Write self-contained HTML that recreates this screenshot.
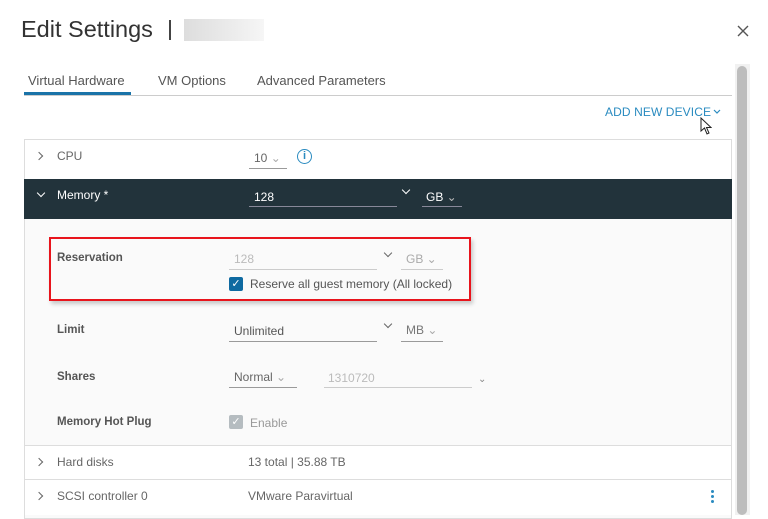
<!DOCTYPE html>
<html><head><style>
*{margin:0;padding:0;box-sizing:border-box}
body{width:768px;height:515px;background:#fff;font-family:"Liberation Sans",sans-serif;color:#565656;position:relative;overflow:hidden;font-size:12px}
.a{position:absolute;white-space:nowrap}
.ul{position:absolute;height:1px;background:#9a9a9a}
.chev{position:absolute;width:6px;height:6px;border-right:1.3px solid #666;border-bottom:1.3px solid #666}
</style></head><body>
<div class="a" style="left:21px;top:16px;font-size:23.5px;color:#333">Edit Settings</div>
<div class="a" style="left:169px;top:20px;width:1.5px;height:20px;background:#444"></div>
<div class="a" style="left:184px;top:19px;width:80px;height:22px;background:linear-gradient(90deg,#ddd,#eee 70%,#f6f6f6)"></div>
<svg class="a" style="left:737px;top:25px" width="12" height="12"><path d="M1 1L11 11M11 1L1 11" stroke="#555" stroke-width="1.4"/></svg>

<div class="a" style="left:28px;top:73px;font-size:13px;color:#555">Virtual Hardware</div>
<div class="a" style="left:158px;top:73px;font-size:13px;color:#555">VM Options</div>
<div class="a" style="left:257px;top:73px;font-size:13px;color:#555">Advanced Parameters</div>
<div class="a" style="left:24px;top:95px;width:708px;height:1px;background:#ccc"></div>
<div class="a" style="left:24px;top:92px;width:107px;height:3px;background:#1a73a8"></div>

<div class="a" style="left:735px;top:64px;width:15px;height:451px;background:#f1f1f1"></div>
<div class="a" style="left:737px;top:66px;width:10px;height:449px;background:#bdbdbd;border-radius:5px"></div>

<div class="a" style="left:605px;top:105px;font-size:12px;color:#2a8bc0;letter-spacing:0.1px">ADD NEW DEVICE</div>
<svg class="a" style="left:713px;top:109px" width="8" height="6"><path d="M1 1L4 4L7 1" stroke="#2a8bc0" fill="none" stroke-width="1.2"/></svg>
<svg class="a" style="left:700px;top:117px" width="12" height="18"><path d="M1 1L1 14L4.5 11L7 17L9 16L6.5 10.5L11 10.5Z" fill="#fff" stroke="#222" stroke-width="1"/></svg>

<div class="a" style="left:24px;top:139px;width:708px;height:380px;border:1px solid #ddd;background:#fafafa"></div>
<div class="a" style="left:25px;top:140px;width:706px;height:39px;background:#fff"></div>
<div class="chev" style="left:36px;top:153px;transform:rotate(-45deg)"></div>
<div class="a" style="left:57px;top:149px;font-size:12px;color:#666">CPU</div>
<div class="a" style="left:254px;top:151px;font-size:12px;color:#666">10 <span style="color:#aaa">⌄</span></div>
<div class="ul" style="left:249px;top:168px;width:38px"></div>
<div class="a" style="left:297px;top:149px;width:15px;height:15px;border:1.5px solid #2a8bc0;border-radius:50%;color:#2a8bc0;font-size:11px;font-weight:bold;text-align:center;line-height:12px">i</div>

<div class="a" style="left:24px;top:179px;width:708px;height:40px;background:#22333b"></div>
<div class="chev" style="left:38px;top:190px;transform:rotate(45deg);border-color:#fff"></div>
<div class="a" style="left:57px;top:188px;font-size:12px;color:#fff">Memory *</div>
<div class="a" style="left:254px;top:190px;font-size:12px;color:#fff">128</div>
<div class="ul" style="left:249px;top:206px;width:148px;background:#889"></div>
<div class="chev" style="left:403px;top:187px;transform:rotate(45deg);border-color:#fff"></div>
<div class="a" style="left:426px;top:190px;font-size:12px;color:#fff">GB <span style="color:#bbb">⌄</span></div>
<div class="ul" style="left:422px;top:206px;width:40px;background:#889"></div>

<div class="a" style="left:49px;top:237px;width:422px;height:64px;border:2px solid #e8141c;box-shadow:2px 3px 4px rgba(0,0,0,.2)"></div>
<div class="a" style="left:57px;top:252px;font-size:11.5px;font-weight:bold;color:#555">Reservation</div>
<div class="a" style="left:234px;top:252px;color:#bbb">128</div>
<div class="ul" style="left:229px;top:269px;width:148px;background:#ccc"></div>
<div class="chev" style="left:385px;top:250px;transform:rotate(45deg)"></div>
<div class="a" style="left:406px;top:252px;color:#aaa">GB ⌄</div>
<div class="ul" style="left:401px;top:269px;width:42px;background:#ccc"></div>
<div class="a" style="left:229px;top:277px;width:14px;height:14px;background:#0f6aa1;border-radius:2px;color:#fff;font-size:11px;text-align:center;line-height:14px">✓</div>
<div class="a" style="left:250px;top:277px;color:#555">Reserve all guest memory (All locked)</div>

<div class="a" style="left:57px;top:324px;font-size:11.5px;font-weight:bold;color:#555">Limit</div>
<div class="a" style="left:234px;top:324px;color:#555">Unlimited</div>
<div class="ul" style="left:229px;top:341px;width:148px"></div>
<div class="chev" style="left:385px;top:321px;transform:rotate(45deg)"></div>
<div class="a" style="left:406px;top:323px;color:#777">MB <span style="color:#aaa">⌄</span></div>
<div class="ul" style="left:401px;top:341px;width:42px"></div>

<div class="a" style="left:57px;top:371px;font-size:11.5px;font-weight:bold;color:#555">Shares</div>
<div class="a" style="left:234px;top:370px;color:#666">Normal <span style="color:#aaa">⌄</span></div>
<div class="ul" style="left:229px;top:387px;width:68px"></div>
<div class="a" style="left:328px;top:371px;color:#bbb">1310720</div>
<div class="ul" style="left:324px;top:387px;width:148px;background:#ccc"></div>
<div class="a" style="left:478px;top:374px;color:#888;font-size:10px">⌄</div>

<div class="a" style="left:57px;top:416px;font-size:11.5px;font-weight:bold;color:#555">Memory Hot Plug</div>
<div class="a" style="left:229px;top:415px;width:14px;height:14px;background:#b5bcc0;border-radius:2px;color:#fff;font-size:11px;text-align:center;line-height:14px">✓</div>
<div class="a" style="left:250px;top:416px;color:#999">Enable</div>

<div class="a" style="left:25px;top:445px;width:706px;height:70px;background:#fff;border-top:1px solid #ddd"></div>
<div class="a" style="left:25px;top:479px;width:706px;height:1px;background:#ddd"></div>
<div class="chev" style="left:36px;top:459px;transform:rotate(-45deg)"></div>
<div class="a" style="left:57px;top:455px;color:#666">Hard disks</div>
<div class="a" style="left:248px;top:455px;color:#666">13 total | 35.88 TB</div>
<div class="chev" style="left:36px;top:493px;transform:rotate(-45deg)"></div>
<div class="a" style="left:57px;top:489px;color:#666">SCSI controller 0</div>
<div class="a" style="left:248px;top:489px;color:#666">VMware Paravirtual</div>
<div class="a" style="left:711px;top:490px;width:3px;height:3px;background:#2a8bc0;border-radius:50%;box-shadow:0 5px 0 #2a8bc0,0 10px 0 #2a8bc0"></div>
</body></html>
